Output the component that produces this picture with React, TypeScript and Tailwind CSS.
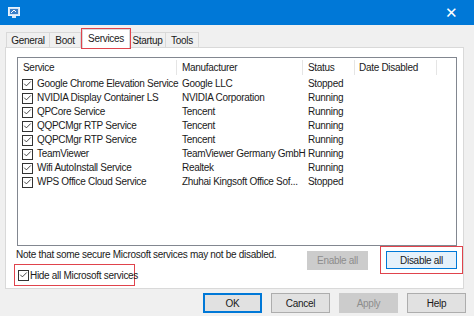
import { Check } from 'lucide-react';

const services = [
  { name: 'Google Chrome Elevation Service', maker: 'Google LLC', status: 'Stopped' },
  { name: 'NVIDIA Display Container LS', maker: 'NVIDIA Corporation', status: 'Running' },
  { name: 'QPCore Service', maker: 'Tencent', status: 'Running' },
  { name: 'QQPCMgr RTP Service', maker: 'Tencent', status: 'Running' },
  { name: 'QQPCMgr RTP Service', maker: 'Tencent', status: 'Running' },
  { name: 'TeamViewer', maker: 'TeamViewer Germany GmbH', status: 'Running' },
  { name: 'Wifi AutoInstall Service', maker: 'Realtek', status: 'Running' },
  { name: 'WPS Office Cloud Service', maker: 'Zhuhai Kingsoft Office Sof...', status: 'Stopped' },
];

const tabs = [
  { label: 'General', w: 'w-[44px]' },
  { label: 'Boot', w: 'w-[32px]' },
  { label: 'Services', w: 'w-[48px]' },
  { label: 'Startup', w: 'w-[37px]' },
  { label: 'Tools', w: 'w-[34px]' },
];

function Box() {
  return (
    <span className="flex h-[11px] w-[11px] shrink-0 items-center justify-center border border-[#333] bg-white">
      <Check size={10} strokeWidth={2.2} className="text-[#222]" />
    </span>
  );
}

function MonitorIcon() {
  return (
    <svg width="12" height="12" viewBox="0 0 12 12">
      <rect x="0.5" y="0.5" width="11" height="8" fill="#cfe3f7" stroke="#e8f2fc" />
      <rect x="2" y="2" width="8" height="5" fill="#3b7fc9" />
      <path d="M3 6 L6 3 L8 5" stroke="#ffffff" strokeWidth="1" fill="none" />
      <rect x="4" y="9" width="4" height="2" fill="#d6e6f6" />
    </svg>
  );
}

export default function App() {
  return (
    <div
      className="flex h-[316px] w-[474px] flex-col overflow-hidden whitespace-nowrap bg-[#f0f0f0] text-[10px] tracking-[-0.3px] text-[#1a1a1a]"
      style={{ fontFamily: '"Liberation Sans", Arial, sans-serif' }}
    >
      <div className="flex h-[25px] shrink-0 items-center justify-between bg-[#0078d7] pl-[8px] pr-[16px]">
        <MonitorIcon />
        <span className="text-[15px] font-light leading-none text-white">✕</span>
      </div>

      <div className="mt-[4px] flex h-[18px] shrink-0 items-end pl-[6px]">
        {tabs.map((t) =>
          t.label === 'Services' ? (
            <div
              key={t.label}
              className={`relative z-10 -mb-px ml-px flex h-[19px] ${t.w} items-center justify-center border-x border-t border-[#d9d9d9] bg-white pb-[2px] outline outline-[1.5px] outline-[#e0434c]`}
            >
              {t.label}
            </div>
          ) : (
            <div
              key={t.label}
              className={`-ml-px flex h-[15px] ${t.w} items-center justify-center border border-b-0 border-[#d9d9d9] bg-[#f0f0f0] first:ml-0`}
            >
              {t.label}
            </div>
          )
        )}
      </div>

      <div className="ml-[5px] mr-[10px] flex h-[242px] shrink-0 flex-col border border-[#d9d9d9] bg-white pl-[11px] pr-[6px] pt-[9px]">
        <div className="flex h-[189px] shrink-0 flex-col border border-[#828790] bg-white">
          <div className="grid h-[19px] grid-cols-[159px_126px_52px_82px_1fr] items-center">
            <span className="border-r border-[#e5e5e5] pl-[5px]">Service</span>
            <span className="border-r border-[#e5e5e5] pl-[5px]">Manufacturer</span>
            <span className="border-r border-[#e5e5e5] pl-[5px]">Status</span>
            <span className="border-r border-[#e5e5e5] pl-[4px]">Date Disabled</span>
            <span />
          </div>
          <div className="flex flex-col">
            {services.map((s, i) => (
              <div key={i} className="grid h-[14px] grid-cols-[159px_126px_52px_82px_1fr] items-center leading-none">
                <span className="flex items-center gap-[4px] pl-[4px]">
                  <Box />
                  {s.name}
                </span>
                <span className="pl-[5px]">{s.maker}</span>
                <span className="pl-[5px]">{s.status}</span>
                <span />
                <span />
              </div>
            ))}
          </div>
        </div>

        <div className="mt-[2px] flex items-start justify-between">
          <div className="flex flex-col">
            <span className="-ml-[1px] leading-[14px]">Note that some secure Microsoft services may not be disabled.</span>
            <div className="-ml-[3px] mt-[2px] flex h-[22px] w-[121px] items-center gap-[1px] border border-[#e0434c] pl-[3px]">
              <Box />
              <span>Hide all Microsoft services</span>
            </div>
          </div>
          <div className="-mr-[6px] -mt-[2px] flex items-center gap-[12px]">
            <div className="flex h-[19px] w-[61px] items-center justify-center border border-[#cccccc] bg-[#cccccc] text-[#8d8d8d]">
              Enable all
            </div>
            <div className="flex h-[28px] w-[83px] items-center justify-center border border-[#e0434c]">
              <div className="flex h-[18px] w-[71px] items-center justify-center border border-[#0078d7] bg-[#e5f1fb]">
                Disable all
              </div>
            </div>
          </div>
        </div>
      </div>

      <div className="mt-[4px] flex justify-end gap-[9px] pr-[8px]">
        <div className="flex h-[20px] w-[59px] items-center justify-center border-2 border-[#0078d7] bg-[#e1e1e1]">OK</div>
        <div className="flex h-[20px] w-[59px] items-center justify-center border border-[#adadad] bg-[#e1e1e1]">Cancel</div>
        <div className="flex h-[20px] w-[59px] items-center justify-center border border-[#cccccc] bg-[#cccccc] text-[#8d8d8d]">Apply</div>
        <div className="flex h-[20px] w-[59px] items-center justify-center border border-[#adadad] bg-[#e1e1e1]">Help</div>
      </div>
    </div>
  );
}
